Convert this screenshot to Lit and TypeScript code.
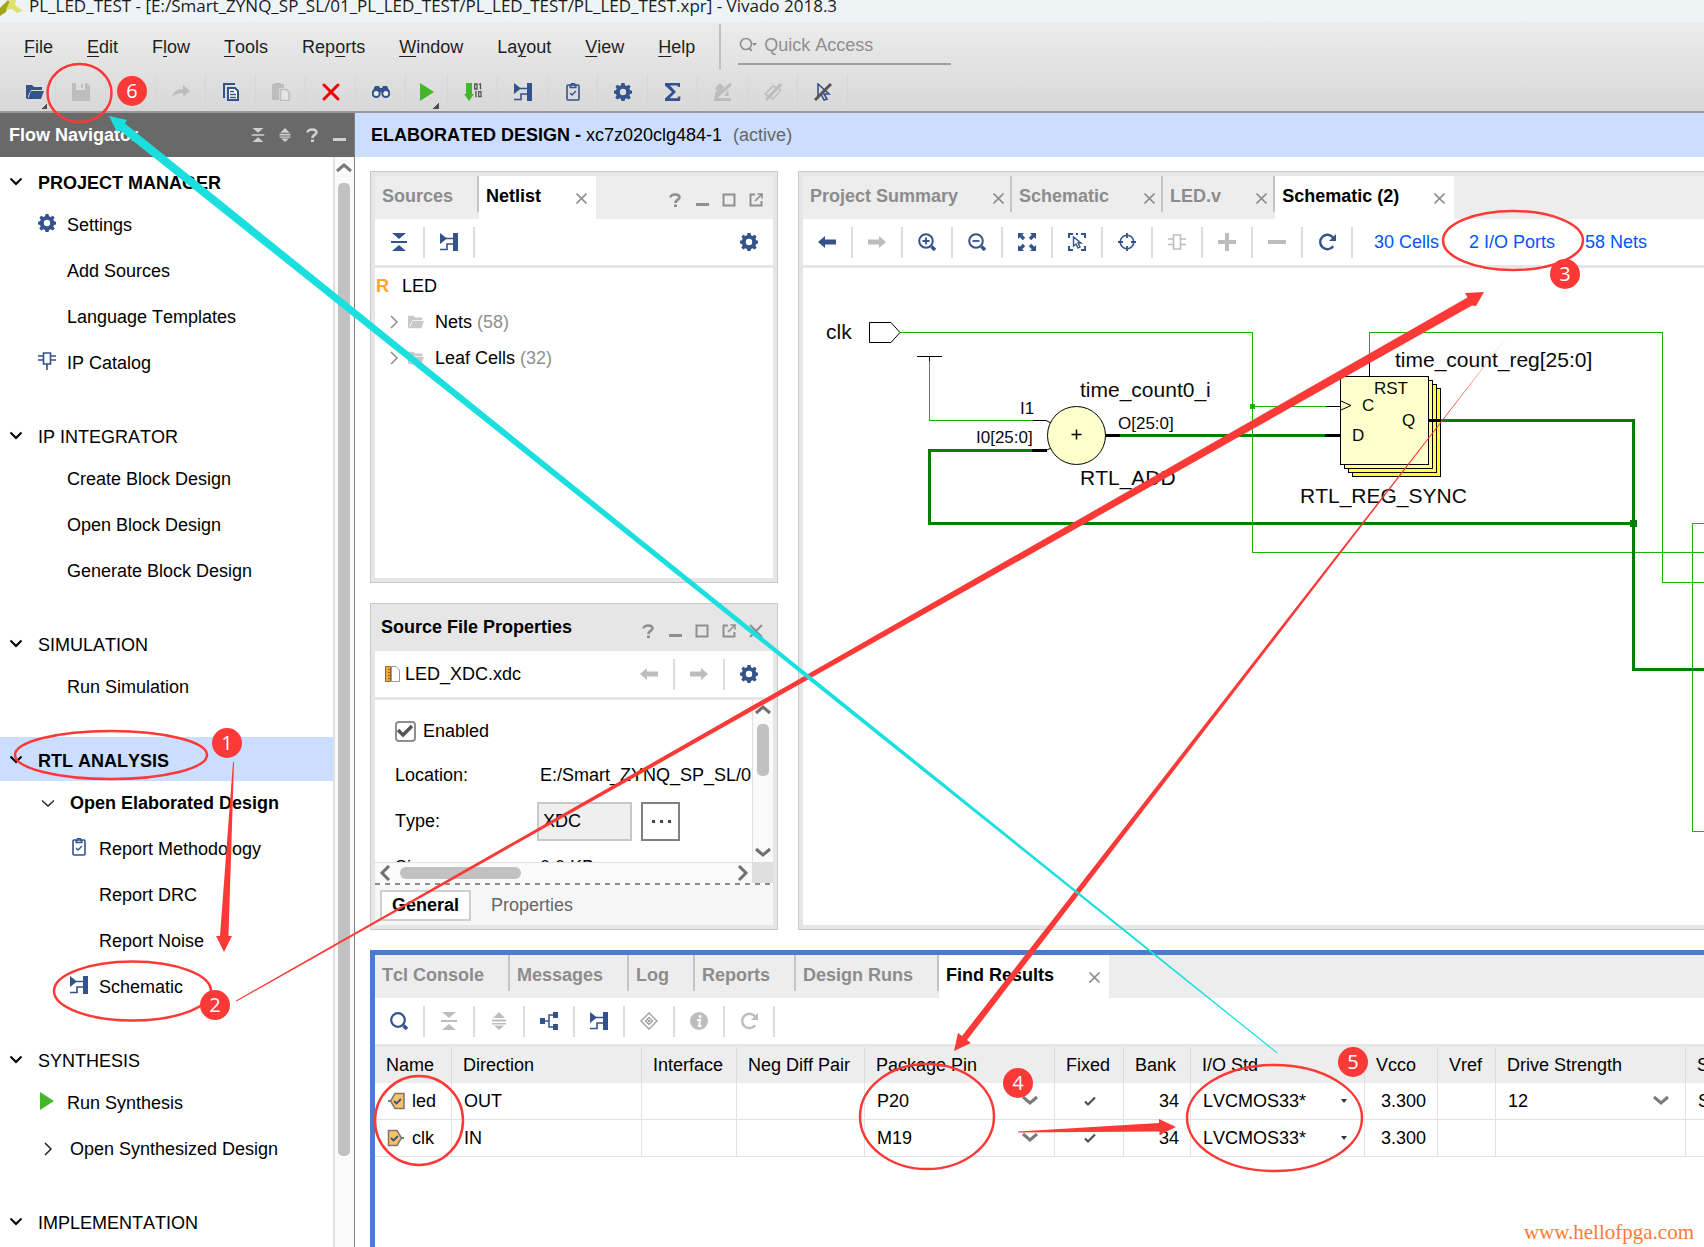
import { LitElement, html, svg, css, nothing, TemplateResult } from "lit";
import { customElement, property, state } from "lit/decorators.js";
import { classMap } from "lit/directives/class-map.js";

/* Icon drawings on an 18 x 18 grid, painted in currentColor. */
const icons: Record<string, TemplateResult> = {
  folderOpen: svg`<path fill="currentColor" d="M0 2h6l2 2h8v3H5L2 13v3H1L0 15z"/><path fill="currentColor" d="M5 8h13l-3 8H2z"/>`,
  save: svg`<path fill="currentColor" d="M0 0h4v7h9V0h2l3 3v15H0z"/><path fill="currentColor" d="M9 1h2v4H9z"/>`,
  undo: svg`<path fill="currentColor" d="M0 8l7-6v4c6 0 10 3 11 8-3-3-6-4-11-4v4z"/>`,
  redo: svg`<path fill="currentColor" d="M18 8l-7-6v4C5 6 1 9 0 14c3-3 6-4 11-4v4z"/>`,
  copy: svg`<path fill="none" stroke="currentColor" stroke-width="2" d="M3 14H2V1h10v1"/><path fill="#fff" stroke="currentColor" stroke-width="2" d="M6 5h7l3 3v9H6z"/><path stroke="currentColor" stroke-width="1.5" d="M8 8.5h4M8 11.500h6M8 14.500h6"/>`,
  paste: svg`<path fill="currentColor" d="M0 1h3V0h6v1h3v4H7v12H0z"/><path fill="#e4e4e4" stroke="currentColor" stroke-width="1.500" d="M8.500 6.500h6l2.500 3v8H8.500z"/>`,
  cross: svg`<path stroke="#f00000" stroke-width="3" stroke-linecap="round" d="M2 2l14 14M16 2L2 16"/>`,
  binoculars: svg`<path fill="currentColor" d="M3 3h4l1 2h2l1-2h4l3 6H0z"/><circle cx="4.200" cy="10.500" r="3.500" fill="#eee" stroke="currentColor" stroke-width="2"/><circle cx="13.800" cy="10.500" r="3.500" fill="#eee" stroke="currentColor" stroke-width="2"/>`,
  play: svg`<path fill="#43b72a" d="M2 0l14 9L2 18z"/>`,
  binary: svg`<path fill="#43b72a" d="M2 0h6v11h2l-5 7-5-7h2z"/><g fill="none" stroke="#555" stroke-width="1.300"><path d="M10.700 1h2.300v5h-2.300zM15 1.600l1.500-.8v5.800M11 9.500l1-.7v5.700M14.700 8.700H17v5h-2.300z"/></g>`,
  schematic: svg`<path fill="currentColor" d="M0 0l7 5.500L0 11zM13 0h5v18h-5z"/><path fill="none" stroke="currentColor" stroke-width="1.600" d="M6 5.500h7M13 11H7v5.500H0"/>`,
  clipboard: svg`<rect x="3" y="2" width="12" height="15" rx="1" fill="none" stroke="currentColor" stroke-width="1.600"/><path fill="none" stroke="currentColor" stroke-width="1.300" d="M6 4.500h6V2.500h-1.500V.7h-3v1.800H6zM6 10l2 2 4-4"/>`,
  gear: svg`<path fill="currentColor" fill-rule="evenodd" d="M7.500 0h3l.5 2.300 1.700.7 2-1.300 1.900 1.900-1.200 2 .7 1.700 2.300.5v2.600l-2.300.5-.7 1.700 1.300 2.100-2 1.900-2-1.300-1.700.7-.5 2.400h-3L7 16l-1.700-.7-2 1.300-2-1.900 1.300-2.100-.6-1.700L0 10.400V7.800l2-.5.700-1.700-1.300-2 1.900-1.900 2 1.300L7 2.300zM9 5.800a3.200 3.200 0 100 6.400 3.200 3.200 0 000-6.400z"/>`,
  sigma: svg`<path fill="currentColor" d="M1 0h15v4h-2l-.5-1.500H6L12 9l-6.500 6.300h8L14 13.500h2.500L16 18H1v-2.500L8 9 1 2.500z"/>`,
  mutedPen: svg`<path fill="currentColor" d="M0 15h17v3H0zM1 5l5-5 4 4-4 7H3v3H1v-4l2-2zM10 13l4-6 1 6z"/><path stroke="currentColor" stroke-width="3" d="M17 1L1 15"/>`,
  mutedChip: svg`<path fill="none" stroke="currentColor" stroke-width="1.500" d="M1 11L9 3l8 4-8 9z"/><path stroke="currentColor" stroke-width="3" d="M17 1L2 17"/>`,
  mutedCursor: svg`<path fill="none" stroke="currentColor" stroke-width="1.600" d="M4 1v13l3-3 3 6 3-1-3-5h5z"/><path stroke="#555" stroke-width="3" d="M17 1L1 17"/>`,
  collapse: svg`<path fill="currentColor" d="M2 0h14L9 6zM1 8h16v2H1zM2 18h14l-7-6z"/>`,
  expand: svg`<path fill="currentColor" d="M3 6h12L9 0zM2 7.500h14v2H2zM2 11h14v1.500H2zM4 13.500h10L9 18z"/>`,
  ip: svg`<path fill="none" stroke="currentColor" stroke-width="1.600" d="M5.500 1h7v11h-7zM0 4h5M0 8h5M13 4h5M13 8h5M9 12v6"/>`,
  chip: svg`<path fill="none" stroke="currentColor" stroke-width="1.600" d="M5.500 2h7v14h-7zM0 6h5M0 11.500h5M13 6h5M13 11.500h5"/>`,
  back: svg`<path fill="currentColor" d="M0 9l7-6v3.500h11v5H7V15z"/>`,
  forward: svg`<path fill="currentColor" d="M18 9l-7-6v3.500H0v5h11V15z"/>`,
  zoomIn: svg`<circle cx="8" cy="8" r="6.800" fill="none" stroke="currentColor" stroke-width="2"/><path stroke="currentColor" stroke-width="1.800" d="M8 4.500v7M4.500 8h7"/><path stroke="currentColor" stroke-width="3.400" d="M13.500 13.500L17 17"/>`,
  zoomOut: svg`<circle cx="8" cy="8" r="6.800" fill="none" stroke="currentColor" stroke-width="2"/><path stroke="currentColor" stroke-width="1.800" d="M4.500 8h7"/><path stroke="currentColor" stroke-width="3.400" d="M13.500 13.500L17 17"/>`,
  search: svg`<circle cx="8" cy="8" r="6.800" fill="none" stroke="currentColor" stroke-width="2.200"/><path stroke="currentColor" stroke-width="3.600" d="M13.500 13.500L17 17"/>`,
  fit: svg`<path fill="currentColor" d="M0 0h6L4.200 1.800l3 3-2.400 2.400-3-3L0 6zM18 0v6l-1.800-1.800-3 3-2.400-2.400 3-3L12 0zM0 18v-6l1.800 1.800 3-3 2.400 2.400-3 3L6 18zM18 18h-6l1.800-1.800-3-3 2.400-2.400 3 3L18 12z"/>`,
  selectArea: svg`<path fill="none" stroke="currentColor" stroke-width="2" d="M1 5V1h4M13 1h4v4M1 13v4h4M13 17h4v-4M8 1h2"/><path fill="#fff" stroke="currentColor" stroke-width="1.400" d="M5.500 4v9l2.500-2 2 4 2-1-2-4h3z"/>`,
  target: svg`<circle cx="9" cy="9" r="6.800" fill="none" stroke="currentColor" stroke-width="1.600"/><path stroke="currentColor" stroke-width="1.800" d="M9 0v5M9 13v5M0 9h5M13 9h5"/>`,
  plus: svg`<path stroke="currentColor" stroke-width="4" d="M9 0v18M0 9h18"/>`,
  minus: svg`<path stroke="currentColor" stroke-width="4" d="M0 9h18"/>`,
  refresh: svg`<path fill="none" stroke="currentColor" stroke-width="2.400" d="M15.200 13.200A7.200 7.200 0 1115 4.500"/><path fill="currentColor" d="M18 1v7h-7z"/>`,
  hierarchy: svg`<path fill="currentColor" d="M0 6h5v6H0zM13 0h5v6h-5zM13 12h5v6h-5z"/><path fill="none" stroke="currentColor" stroke-width="1.500" d="M5 9h4M14 3H9v12h5"/>`,
  diamond: svg`<path fill="none" stroke="#a0a0a0" stroke-width="1.400" d="M9 1l8 8-8 8-8-8zM9 5.500L12.500 9 9 12.500 5.500 9z"/><circle cx="9" cy="9" r="1.300" fill="#a0a0a0"/>`,
  info: svg`<circle cx="9" cy="9" r="9" fill="currentColor"/><circle cx="10" cy="4.500" r="1.500" fill="#fff"/><path fill="none" stroke="#fff" stroke-width="2" d="M7 8h3l-1 6h2.500"/>`,
  help: svg`<path fill="none" stroke="currentColor" stroke-width="2.600" d="M4.500 6.500C4.500 2.500 13.500 2.500 13.500 6.500c0 2-4 2.500-4 5.500"/><path fill="currentColor" d="M8 13.500h3v2.500H8z"/>`,
  minimize: svg`<path fill="currentColor" d="M3 12h13v3H3z"/>`,
  maximize: svg`<path fill="none" stroke="currentColor" stroke-width="2" d="M3.500 3.500h11v11h-11z"/>`,
  float: svg`<path fill="none" stroke="currentColor" stroke-width="2" d="M8 3.500H3.500v11h11V10"/><path fill="none" stroke="currentColor" stroke-width="1.600" d="M8 10l6-6M10.500 3H15v4.500"/>`,
  closeBig: svg`<path stroke="currentColor" stroke-width="2" d="M3 3l12 12M15 3L3 15"/>`,
  chevronDown: svg`<path fill="none" stroke="currentColor" stroke-width="2" d="M3.500 6.500L9 12l5.500-5.500"/>`,
  chevronDownThin: svg`<path fill="none" stroke="currentColor" stroke-width="1.300" d="M3 6.500L9 12l6-5.500"/>`,
  chevronRight: svg`<path fill="none" stroke="currentColor" stroke-width="1.500" d="M6 3l6 6-6 6"/>`,
  check: svg`<path fill="none" stroke="currentColor" stroke-width="2.200" d="M4 9.500l3 3 7-7"/>`,
  portOut: svg`<path fill="#fcc163" stroke="#777" stroke-width="1.500" d="M17 1.500v15H8L3.500 9 8 1.500z"/><path stroke="#777" stroke-width="2" d="M1 9h3"/><path fill="none" stroke="#34528c" stroke-width="1.800" d="M7 9l2.500 2.500L14 7"/>`,
  portIn: svg`<path fill="#fcc163" stroke="#777" stroke-width="1.500" d="M1.500 1.500v15h8.500L14.500 9 10 1.500z"/><path stroke="#777" stroke-width="2" d="M14 9h3"/><path fill="none" stroke="#34528c" stroke-width="1.800" d="M4 9l2.500 2.500L11 7"/>`,
  fileXdc: svg`<path fill="#f6a432" stroke="#8a6a30" d="M2.500 1.500h5v15h-5z"/><path stroke="#8a6a30" d="M5 4.500h2M5 7.500h2M5 10.500h2M5 13.500h2"/><path fill="#fff" stroke="#999" d="M8.500 1.500H13l3.500 3.500v11.500h-8z"/>`,
};

const icon = (name: string, size = 18) =>
  html`<svg width=${size} height=${size} viewBox="0 0 18 18" aria-hidden="true">${icons[name]}</svg>`;

const shared = css`
  *, *::before, *::after { box-sizing: border-box; }
  button, input, select {
    font: inherit; color: inherit; background: none; border: 0; padding: 0; margin: 0; text-align: left; border-radius: 0;
  }
  svg { display: block; flex: none; }
  a { text-decoration: none; color: inherit; }
  .tabs { display: flex; align-items: flex-start; height: 43px; background: #ededed; flex: none; }
  .tab { display: flex; align-items: center; height: 36px; border-right: 2px solid #c4c4c4; padding: 3px 6px 0 7px; }
  .tab.plain { padding-right: 24px; }
  .tab.active { height: 43px; background: #fff; border: 0; padding: 0 9px 4px 7px; }
  .tabname { font-weight: bold; color: #8c8c8c; white-space: nowrap; }
  .active .tabname { color: #000; }
  .tabclose { margin-left: 35px; color: #8f8f8f; padding-top: 5px; }
  .spring { flex: 1; }
  .wintools { display: flex; padding: 15px 4px 0 0; color: #8f8f8f; }
  .wintools button { width: 27px; display: flex; justify-content: center; }
  .tools { display: flex; align-items: center; height: 49px; border-bottom: 3px solid #e6e6e6; background: #fff; flex: none; }
  .tool { width: 50px; height: 31px; display: flex; align-items: center; justify-content: center; border-right: 2px solid #dcdcdc; color: #34528c; flex: none; }
  .tool.off { color: #bdbdbd; }
  .tool.last { width: 48px; border-right: 0; }
`;

interface TabSpec { name: string; closable?: boolean; active?: boolean; }

const tabStrip = (tabs: TabSpec[], tools: unknown = nothing) => html`
  <div class="tabs" role="tablist">
    ${tabs.map((t) => html`
      <div class=${classMap({ tab: true, active: !!t.active, plain: !t.closable })}>
        <button class="tabname" role="tab" aria-selected=${t.active ? "true" : "false"}>${t.name}</button>
        ${t.closable ? html`<button class="tabclose" aria-label="Close ${t.name}">
          <svg width="11" height="11" viewBox="0 0 11 11"><path stroke="currentColor" stroke-width="1.6" d="M0.500 0.500l10 10M10.500 0.500l-10 10"/></svg>
        </button>` : nothing}
      </div>`)}
    <span class="spring"></span>
    ${tools}
  </div>`;

const winTools = (names: string[]) => html`<div class="wintools">
  ${names.map((n) => html`<button aria-label=${n}>${icon(n)}</button>`)}</div>`;

const tool = (name: string, cls = "") =>
  html`<button class="tool ${cls}" aria-label=${name}>${icon(name)}</button>`;

/* ---------- Menu bar and main toolbar ---------- */
@customElement("main-bar")
class MainBar extends LitElement {
  static styles = [shared, css`
    :host { display: block; flex: none; }
    .title { height: 22px; background: #eef4f6; display: flex; gap: 5px; overflow: hidden; color: #1a1a1a; }
    .title span { font: 17px/24px "Open Sans", sans-serif; margin-top: -6px; white-space: nowrap; }
    .chrome { height: 91px; background: linear-gradient(#ececec, #d8d8d8); border-bottom: 2px solid #999; }
    .menu { display: flex; height: 48px; padding: 2px 0 0 7px; color: #1e1e1e; }
    .menu button { padding: 5px 17px 0; height: 46px; white-space: nowrap; }
    .menu button { padding-top: 0; }
    u { text-underline-offset: 3px; text-decoration-thickness: 1px; }
    .rule { width: 2px; background: #c0c0c0; margin-left: 7px; height: 46px; }
    .quick { display: flex; align-items: center; gap: 6px; margin-left: 17px; padding-top: 3px; width: 213px; height: 41px; border-bottom: 2px solid #a0a0a0; color: #8f8f8f; }
    .quick input { flex: 1; min-width: 0; height: 30px; outline: 0; }
    .quick input::placeholder { color: #8f8f8f; opacity: 1; }
    .row { display: flex; align-items: center; height: 43px; padding-left: 14px; }
    .act { width: 50px; height: 34px; display: flex; align-items: center; justify-content: center; border-right: 1px solid #d6d6d6; color: #34528c; }
    .act.off { color: #bdbdbd; }
    .act.menuish { width: 42px; background: linear-gradient(135deg, transparent 50%, #505050 50%) 27px 100% / 6px 6px no-repeat; }
  `];

  private menus: [string, string, string][] = [
    ["", "F", "ile"], ["", "E", "dit"], ["F", "l", "ow"], ["", "T", "ools"], ["Rep", "o", "rts"],
    ["", "W", "indow"], ["La", "y", "out"], ["", "V", "iew"], ["", "H", "elp"],
  ];
  private actions: [string, string][] = [
    ["folderOpen", "menuish"], ["save", "off"], ["undo", "off"], ["redo", "off"], ["copy", ""], ["paste", "off"],
    ["cross", ""], ["binoculars", ""], ["play", "menuish"], ["binary", ""], ["schematic", ""], ["clipboard", ""],
    ["gear", ""], ["sigma", ""], ["mutedPen", "off"], ["mutedChip", "off"], ["mutedCursor", ""],
  ];

  render() {
    return html`
      <header class="title">
        <svg width="24" height="16" viewBox="0 0 24 16" aria-hidden="true">
          <path fill="#a3a31c" d="M0 8L8 0l2 2L6 12 0 16z"/><path fill="#dde06a" d="M10 0h6l-1 5 8 6-6 2-5-4-6 1z"/>
        </svg>
        <span>PL_LED_TEST - [E:/Smart_ZYNQ_SP_SL/01_PL_LED_TEST/PL_LED_TEST/PL_LED_TEST.xpr] - Vivado 2018.3</span>
      </header>
      <div class="chrome">
        <nav class="menu">
          ${this.menus.map(([a, b, c]) => html`<button>${a}<u>${b}</u>${c}</button>`)}
          <span class="rule"></span>
          <label class="quick">
            <svg width="20" height="18" viewBox="0 0 20 18" aria-hidden="true">
              <circle cx="8" cy="8" r="5.500" fill="none" stroke="currentColor" stroke-width="1.600"/>
              <path stroke="currentColor" stroke-width="2" d="M11.500 12l2 3"/><path fill="currentColor" d="M14 7h5l-2.500 3z"/>
            </svg>
            <input type="search" placeholder="Quick Access" aria-label="Quick Access">
          </label>
        </nav>
        <div class="row">
          ${this.actions.map(([n, c]) => html`<button class="act ${c}" aria-label=${n}>${icon(n)}</button>`)}
        </div>
      </div>`;
  }
}

/* ---------- Flow Navigator ---------- */
interface FlowItem { text: string; icon?: string; level?: "group" | "sub"; bold?: boolean; color?: string; }
interface FlowSection { title: string; bold?: boolean; selected?: boolean; items: FlowItem[]; }

@customElement("flow-navigator")
class FlowNavigator extends LitElement {
  static styles = [shared, css`
    :host { display: flex; flex-direction: column; width: 355px; flex: none; border-right: 1px solid #808080; min-height: 0; }
    .head { display: flex; align-items: center; height: 44px; background: #696969; color: #fff; font-weight: bold; padding-left: 9px; flex: none; }
    .head button { width: 27px; display: flex; justify-content: center; color: #d0d0d0; }
    .head .pad { width: 2px; }
    .body { display: flex; flex: 1; min-height: 0; }
    .list { flex: 1; overflow: hidden; padding-top: 2px; }
    .section { margin-bottom: 26px; }
    .heading, .item { display: flex; align-items: center; width: 100%; white-space: nowrap; }
    .heading { height: 44px; padding: 4px 0 0 7px; gap: 13px; }
    .heading svg { margin-bottom: 4px; }
    .heading.bold, .item.bold { font-weight: bold; }
    .heading.selected { background: #ccdeff; }
    .item { height: 46px; padding: 0 0 3px 38px; gap: 11px; }
    .item.group { padding-left: 39px; gap: 13px; }
    .item.sub { padding-left: 70px; }
    .slot { width: 18px; height: 22px; color: #34528c; }
    .group .slot { color: #222; height: 18px; }
    .bar { width: 21px; background: #fafafa; border-left: 2px solid #e0e0e0; display: flex; flex-direction: column; align-items: center; padding: 2px 4px 91px 2px; gap: 6px; color: #7a7a7a; flex: none; }
    .thumb { flex: 1; width: 12px; border-radius: 5px; background: #c1c1c1; }
  `];

  private sections: FlowSection[] = [
    { title: "PROJECT MANAGER", bold: true, items: [
      { text: "Settings", icon: "gear" }, { text: "Add Sources" }, { text: "Language Templates" }, { text: "IP Catalog", icon: "ip" }] },
    { title: "IP INTEGRATOR", items: [
      { text: "Create Block Design" }, { text: "Open Block Design" }, { text: "Generate Block Design" }] },
    { title: "SIMULATION", items: [{ text: "Run Simulation" }] },
    { title: "RTL ANALYSIS", bold: true, selected: true, items: [
      { text: "Open Elaborated Design", icon: "chevronDownThin", level: "group", bold: true },
      { text: "Report Methodology", icon: "clipboard", level: "sub" }, { text: "Report DRC", level: "sub" },
      { text: "Report Noise", level: "sub" }, { text: "Schematic", icon: "schematic", level: "sub" }] },
    { title: "SYNTHESIS", items: [
      { text: "Run Synthesis", icon: "play" }, { text: "Open Synthesized Design", icon: "chevronRight", level: "group" }] },
    { title: "IMPLEMENTATION", items: [] },
  ];

  render() {
    return html`
      <div class="head">Flow Navigator<span class="spring"></span>
        <button aria-label="Collapse all">${icon("collapse", 14)}</button>
        <button aria-label="Expand all">${icon("expand", 14)}</button>
        <button aria-label="Help">${icon("help")}</button>
        <button aria-label="Minimize">${icon("minimize")}</button><span class="pad"></span>
      </div>
      <div class="body">
        <nav class="list">
          ${this.sections.map((s) => html`<div class="section">
            <button class=${classMap({ heading: true, bold: !!s.bold, selected: !!s.selected })}>${icon("chevronDown")}${s.title}</button>
            ${s.items.map((i) => html`<button class=${classMap({ item: true, bold: !!i.bold, group: i.level === "group", sub: i.level === "sub" })}>
              <span class="slot">${i.icon ? icon(i.icon) : nothing}</span>${i.text}</button>`)}
          </div>`)}
        </nav>
        <div class="bar">
          <svg width="16" height="18" viewBox="0 0 16 18"><path fill="none" stroke="currentColor" stroke-width="3" d="M1 12l7-6 7 6"/></svg>
          <span class="thumb"></span>
        </div>
      </div>`;
  }
}

/* ---------- Netlist panel ---------- */
@customElement("netlist-panel")
class NetlistPanel extends LitElement {
  static styles = [shared, css`
    :host { display: flex; flex-direction: column; border: 1px solid #c8c8c8; min-height: 0; min-width: 0; }
    .frame { flex: 1; display: flex; flex-direction: column; border: 4px solid #e6e6e6; background: #fff; min-height: 0; }
    ul { list-style: none; margin: 0; padding: 0; }
    li { display: flex; align-items: center; height: 36px; }
    .root { gap: 13px; padding-left: 1px; }
    .root b { color: #fba62e; }
    .leaf { padding-left: 10px; gap: 5px; color: #8f8f8f; }
    .leaf .name { color: #000; margin-left: 6px; }
    .folder { color: #c8c8c8; }
  `];

  render() {
    const branch = (name: string, n: number) => html`<li class="leaf">
      ${icon("chevronRight")}<span class="folder">${icon("folderOpen", 16)}</span><span class="name">${name}</span>(${n})</li>`;
    return html`<div class="frame">
      ${tabStrip([{ name: "Sources" }, { name: "Netlist", closable: true, active: true }], winTools(["help", "minimize", "maximize", "float"]))}
      <div class="tools">${tool("collapse")}${tool("schematic")}<span class="spring"></span>${tool("gear", "last")}</div>
      <ul><li class="root"><b>R</b>LED</li>${branch("Nets", 58)}${branch("Leaf Cells", 32)}</ul>
    </div>`;
  }
}

/* ---------- Source File Properties ---------- */
@customElement("file-properties")
class FileProperties extends LitElement {
  @state() private enabled = true;

  static styles = [shared, css`
    :host { display: flex; flex-direction: column; border: 1px solid #c8c8c8; min-height: 0; min-width: 0; }
    .frame { flex: 1; display: flex; flex-direction: column; border: 4px solid #e6e6e6; border-top-width: 0; background: #fff; min-height: 0; }
    .head { display: flex; height: 47px; background: #e6e6e6; padding-left: 6px; font-weight: bold; line-height: 47px; flex: none; white-space: nowrap; }
    .wintools { padding-top: 18px; align-items: flex-start; }
    .file { display: flex; align-items: center; gap: 4px; padding-left: 8px; }
    .body { flex: 1; min-height: 0; display: grid; grid-template-columns: minmax(0, 1fr) 21px; grid-template-rows: minmax(0, 1fr) 21px; }
    .form { overflow: hidden; padding: 10px 0 0 20px; white-space: nowrap; }
    .line { display: flex; align-items: center; height: 46px; }
    .line.first { height: 42px; }
    .line > label, .key { width: 145px; flex: none; }
    .line .tick { display: flex; align-items: center; gap: 7px; width: auto; position: relative; }
    .tick input { appearance: none; width: 21px; height: 21px; border: 2px solid #8f8f8f; border-radius: 4px; background: #fff; }
    .tick svg { position: absolute; left: 1px; top: 1px; color: #555; pointer-events: none; }
    .type { width: 95px; height: 39px; margin-left: -3px; border: 2px solid #c8c8c8; background: #efefef; padding: 0 4px; }
    .more { width: 39px; height: 39px; margin-left: 9px; border: 2px solid #808080; display: flex; align-items: center; justify-content: center; }
    .vbar { background: #fafafa; border-left: 1px solid #e0e0e0; display: flex; flex-direction: column; align-items: center; padding: 3px 0 2px; gap: 5px; color: #707070; }
    .vthumb { width: 12px; height: 52px; border-radius: 5px; background: #c1c1c1; }
    .hbar { background: #fafafa; border-top: 1px solid #e0e0e0; display: flex; align-items: center; padding: 0 2px 0 3px; gap: 6px; color: #707070; }
    .hthumb { width: 121px; height: 12px; border-radius: 6px; background: #c1c1c1; }
    .corner { background: #dedede; }
    .dash { height: 2px; flex: none; background: repeating-linear-gradient(90deg, #8c8c8c 0 5px, transparent 5px 10px); }
    .foot { height: 40px; flex: none; background: #f6f6f6; display: flex; align-items: center; padding-left: 5px; gap: 20px; color: #666; }
    .foot .on { height: 31px; border: 2px solid #cfcfcf; background: #fff; padding: 0 10px; font-weight: bold; color: #000; }
  `];

  render() {
    const arrow = (d: string) => html`<svg width="16" height="16" viewBox="0 0 16 16"><path fill="none" stroke="currentColor" stroke-width="3" d=${d}/></svg>`;
    return html`<div class="frame">
      <div class="head">Source File Properties<span class="spring"></span>
        ${winTools(["help", "minimize", "maximize", "float", "closeBig"])}</div>
      <div class="tools"><span class="file">${icon("fileXdc")}LED_XDC.xdc</span><span class="spring"></span>
        ${tool("back", "off")}${tool("forward", "off")}${tool("gear", "last")}</div>
      <div class="body">
        <div class="form">
          <div class="line first"><label class="tick"><input type="checkbox" .checked=${this.enabled}
            @change=${(e: Event) => (this.enabled = (e.target as HTMLInputElement).checked)}>
            ${this.enabled ? html`<svg width="18" height="18" viewBox="0 0 18 18"><path fill="none" stroke="currentColor" stroke-width="3.400" d="M2 9l5 5L16 5"/></svg>` : nothing}Enabled</label></div>
          <div class="line"><span class="key">Location:</span><span>E:/Smart_ZYNQ_SP_SL/0</span></div>
          <div class="line"><label for="type">Type:</label><input id="type" class="type" readonly value="XDC">
            <button class="more" aria-label="Choose type"><svg width="20" height="4" viewBox="0 0 20 4"><path fill="#444" d="M1 1h3v3H1zM9 1h3v3H9zM17 1h3v3h-3z"/></svg></button></div>
          <div class="line"><span class="key">Size:</span><span>0.0 KB</span></div>
        </div>
        <div class="vbar">${arrow("M1 10l7-6 7 6")}<span class="vthumb"></span><span class="spring"></span>${arrow("M1 5l7 6 7-6")}</div>
        <div class="hbar">${arrow("M11 1L4 8l7 7")}<span class="hthumb"></span><span class="spring"></span>${arrow("M5 1l7 7-7 7")}</div>
        <div class="corner"></div>
      </div>
      <div class="dash"></div>
      <div class="foot"><button class="on">General</button><button>Properties</button></div>
    </div>`;
  }
}

/* ---------- Schematic viewer ---------- */
@customElement("schematic-view")
class SchematicView extends LitElement {
  static styles = [shared, css`
    :host { display: flex; flex-direction: column; border: 1px solid #c8c8c8; border-right: 0; min-height: 0; min-width: 0; }
    .frame { flex: 1; display: flex; flex-direction: column; border: 4px solid #e6e6e6; border-right: 0; background: #fff; min-height: 0; }
    .links { display: flex; gap: 30px; padding-left: 21px; color: #0055ff; white-space: nowrap; }
    .canvas { flex: 1; min-height: 0; overflow: hidden; }
    .canvas svg { width: 100%; height: 100%; }
    .net { fill: none; stroke: #18b200; stroke-width: 1; shape-rendering: crispEdges; }
    .bus { fill: none; stroke: #008000; stroke-width: 3; shape-rendering: crispEdges; }
    .pin { fill: none; stroke: #000; stroke-width: 1; }
    .buspin { stroke: #000; stroke-width: 3; shape-rendering: crispEdges; }
    .big { font-size: 21px; }
    .small { font-size: 17px; }
    text { fill: #0a0a0a; }
  `];

  render() {
    const names: [string, string][] = [["back", ""], ["forward", "off"], ["zoomIn", ""], ["zoomOut", ""], ["fit", ""], ["selectArea", ""],
      ["target", ""], ["chip", "off"], ["plus", "off"], ["minus", "off"], ["refresh", ""]];
    return html`<div class="frame">
      ${tabStrip([{ name: "Project Summary", closable: true }, { name: "Schematic", closable: true }, { name: "LED.v", closable: true },
        { name: "Schematic (2)", closable: true, active: true }])}
      <div class="tools">${names.map(([n, c]) => tool(n, c))}
        <div class="links"><a href="#cells">30 Cells</a><a href="#ports">2 I/O Ports</a><a href="#nets">58 Nets</a></div></div>
      <div class="canvas"><svg role="img" aria-label="Elaborated schematic"><g transform="translate(-803 -268)">
        <path class="net" d="M900 332.500H1252.500V552.500H2400M1252.500 406.500H1326M929.500 361V420.500H1033"/>
        <path class="net" d="M1369.500 363V332.500H1662.500V582.500H2400M2400 523.500H1692.500V831.500H2400"/>
        <path fill="#18b200" d="M1250 404h5v5h-5z"/>
        <path class="bus" d="M1032 450.500H929.500V523.500H1633.500M1120 435.500H1326M1441 420.500H1633.500V669.500H2400"/>
        <path fill="#008000" d="M1630 520h7v7h-7z"/>
        <path class="pin" d="M869.500 322.500H891L900 332.500 891 342.500H869.500zM917 356.500H942M929.500 356.500V361M1033 420.500H1046L1051 423M1326 406.500H1341M1369.500 363V377M1046 450.500L1051 448"/>
        <path class="buspin" d="M1032 450.500H1047M1105 435.500H1120M1325 435.500H1341"/>
        <circle cx="1076.500" cy="435.500" r="29" fill="#ffffcc" stroke="#000"/>
        <path stroke="#000" stroke-width="1.500" d="M1071.500 434.500H1081.500M1076.500 429.500V439.500"/>
        <g stroke="#000" shape-rendering="crispEdges">
          <path fill="#ffff33" d="M1352.500 388.500h88v88h-88z"/><path fill="#ffff55" d="M1348.500 384.500h88v88h-88z"/>
          <path fill="#ffff99" d="M1344.500 380.500h88v88h-88z"/><path fill="#ffffcc" d="M1340.500 376.500h88v88h-88z"/>
        </g>
        <path class="buspin" d="M1429 420.500H1441"/>
        <path class="pin" d="M1341 401L1351 405.500 1341 410"/>
        <g class="big"><text x="826" y="339">clk</text><text x="1080" y="397">time_count0_i</text><text x="1080" y="485">RTL_ADD</text>
          <text x="1395" y="367">time_count_reg[25:0]</text><text x="1300" y="503">RTL_REG_SYNC</text></g>
        <g class="small"><text x="1020" y="414">I1</text><text x="976" y="443">I0[25:0]</text><text x="1118" y="429">O[25:0]</text>
          <text x="1374" y="394">RST</text><text x="1362" y="411">C</text><text x="1402" y="426">Q</text><text x="1352" y="441">D</text></g>
      </g></svg></div>
    </div>`;
  }
}

/* ---------- Find Results ---------- */
interface Port { name: string; dir: string; icon: string; pin: string; drive: string; slew: string; }

@customElement("find-results")
class FindResults extends LitElement {
  @property({ attribute: false }) ports: Port[] = [
    { name: "led", dir: "OUT", icon: "portOut", pin: "P20", drive: "12", slew: "SLOW" },
    { name: "clk", dir: "IN", icon: "portIn", pin: "M19", drive: "", slew: "" },
  ];

  static styles = [shared, css`
    :host { display: flex; flex-direction: column; border: 5px solid #4a7bcf; border-width: 5px 0 0 5px; min-height: 0; min-width: 0; background: #fff; overflow: hidden; }
    table { border-collapse: separate; border-spacing: 0; table-layout: fixed; width: 1369px; flex: none; }
    th { height: 36px; background: #ededed; font-weight: normal; text-align: left; border-right: 1px solid #dcdcdc; padding: 0 0 0 11px; white-space: nowrap; }
    td { height: 37px; border-right: 1px solid #e2e2e2; border-bottom: 1px solid #e2e2e2; padding: 0 11px 0 12px; white-space: nowrap; }
    .num { text-align: right; }
    .fix svg { margin: 0 auto; color: #505050; }
    .port { display: flex; align-items: center; gap: 7px; }
    .pick { display: flex; align-items: center; color: #7a7a7a; }
    .pick select { appearance: none; flex: 1; min-width: 0; color: #000; outline: 0; }
    .pick svg { margin-right: 5px; pointer-events: none; }
    .c77 { width: 77px; } .c190 { width: 190px; } .c95 { width: 95px; } .c128 { width: 128px; }
    .c69 { width: 69px; } .c67 { width: 67px; } .c174 { width: 174px; } .c73 { width: 73px; } .c58 { width: 58px; }
  `];

  private cols: [string, string][] = [["Name", "c77"], ["Direction", "c190"], ["Interface", "c95"], ["Neg Diff Pair", "c128"],
    ["Package Pin", "c190"], ["Fixed", "c69"], ["Bank", "c67"], ["I/O Std", "c174"], ["Vcco", "c73"], ["Vref", "c58"],
    ["Drive Strength", "c190"], ["Slew", "c58"]];

  private pick(label: string, value: string, small = false) {
    return html`<span class="pick"><select aria-label=${label}><option>${value}</option></select>
      ${small
        ? html`<svg width="8" height="6" viewBox="0 0 8 6"><path fill="#333" d="M1 1h6L4 5z"/></svg>`
        : html`<svg width="16" height="12" viewBox="0 0 16 12"><path fill="none" stroke="currentColor" stroke-width="3" d="M1 2l7 6 7-6"/></svg>`}</span>`;
  }

  render() {
    const names: [string, string][] = [["search", ""], ["collapse", "off"], ["expand", "off"], ["hierarchy", ""], ["schematic", ""],
      ["diamond", "off"], ["info", "off"], ["refresh", "off"]];
    return html`
      ${tabStrip([{ name: "Tcl Console" }, { name: "Messages" }, { name: "Log" }, { name: "Reports" }, { name: "Design Runs" },
        { name: "Find Results", closable: true, active: true }])}
      <div class="tools">${names.map(([n, c]) => tool(n, c))}</div>
      <table>
        <thead><tr>${this.cols.map(([n, c]) => html`<th class=${c}>${n}</th>`)}</tr></thead>
        <tbody>${this.ports.map((p) => html`<tr>
          <td><span class="port">${icon(p.icon)}${p.name}</span></td><td>${p.dir}</td><td></td><td></td>
          <td>${this.pick("Package pin", p.pin)}</td><td class="fix">${icon("check")}</td><td class="num">34</td>
          <td>${this.pick("I/O standard", "LVCMOS33*", true)}</td><td class="num">3.300</td><td></td>
          <td>${p.drive ? this.pick("Drive strength", p.drive) : nothing}</td><td>${p.slew}</td></tr>`)}</tbody>
      </table>`;
  }
}

/* ---------- Hand-drawn guide marks over the window ---------- */
@customElement("guide-marks")
class GuideMarks extends LitElement {
  static styles = css`
    :host { position: absolute; left: 0; top: 0; pointer-events: none; }
    svg { display: block; }
    .ring { fill: none; stroke: #fb3a37; stroke-width: 2.500; }
    .red { fill: #fb3a37; }
    text { font: 20px "Open Sans", sans-serif; fill: #fff; text-anchor: middle; }
  `;

  private rings = [[79.500, 93, 32, 29], [111, 755, 96, 24], [132.500, 991, 78.500, 29.500], [1513, 240.500, 70, 29.500],
    [419, 1120.500, 44, 44.500], [927, 1116.500, 67, 52.500], [1274.500, 1118, 87.500, 53]];
  private badges = [[227, 743], [215, 1005], [1565, 274], [1018, 1083], [1353, 1062], [132, 91]];

  render() {
    return html`<svg width="1704" height="1247" viewBox="0 0 1704 1247" aria-hidden="true">
      ${this.rings.map(([x, y, rx, ry]) => svg`<ellipse class="ring" cx=${x} cy=${y} rx=${rx} ry=${ry}/>`)}
      <path class="red" d="M233 762L220 936H216L224 952 232 936H228.500L234 762z"/>
      <path class="red" d="M236 1000.500L1467.500 297.500 1465 293 1484 292 1476 306 1472 305.500 236.500 1001.500z"/>
      <path class="red" d="M1508 335.500L962 1036 958 1033 954 1051 971 1043 967 1040z"/>
      <path class="red" d="M1018 1131.500L1159 1123V1119L1176 1127 1159.500 1135V1131.500L1018 1132.500z"/>
      <path fill="#1adfde" d="M1277.500 1052.500L125 123.500 127 120 109 116 117 132 120 130.500 1276.500 1053z"/>
      ${this.badges.map(([x, y], i) => svg`<circle class="red" cx=${x} cy=${y} r="15"/><text x=${x} y=${y + 7}>${i + 1}</text>`)}
    </svg>`;
  }
}

/* ---------- Window ---------- */
@customElement("app-root")
class AppRoot extends LitElement {
  static styles = [shared, css`
    :host { display: flex; flex-direction: column; position: relative; height: 100vh; overflow: hidden; background: #fff;
      font: 18px/22px "Liberation Sans", Arial, sans-serif; font-kerning: none; color: #000; }
    .work { display: flex; flex: 1; min-height: 0; }
    .main { flex: 1; min-width: 0; display: flex; flex-direction: column; }
    .design { height: 44px; line-height: 44px; background: #ccdeff; padding-left: 16px; flex: none; white-space: nowrap; }
    .design .state { color: #666; margin-left: 11px; }
    .grid { flex: 1; min-height: 0; display: grid; padding: 14px 0 0 15px; gap: 20px;
      grid-template-columns: minmax(0, 408fr) minmax(0, 906fr);
      grid-template-rows: minmax(0, 412fr) minmax(0, 327fr) minmax(0, 297fr); }
    .tall { grid-column: 2; grid-row: 1 / 3; }
    .wide { grid-column: 1 / 3; grid-row: 3; }
    .low { grid-column: 1; grid-row: 2; }
    .site { position: absolute; right: 10px; bottom: 3px; font: 21px/24px "Liberation Serif", serif; color: #ff7b33; }
  `];

  render() {
    return html`
      <main-bar></main-bar>
      <div class="work">
        <flow-navigator></flow-navigator>
        <main class="main">
          <div class="design"><b>ELABORATED DESIGN -</b> xc7z020clg484-1<span class="state">(active)</span></div>
          <div class="grid">
            <netlist-panel></netlist-panel>
            <schematic-view class="tall"></schematic-view>
            <file-properties class="low"></file-properties>
            <find-results class="wide"></find-results>
          </div>
        </main>
      </div>
      <guide-marks></guide-marks>
      <a class="site" href="http://www.hellofpga.com">www.hellofpga.com</a>`;
  }
}
